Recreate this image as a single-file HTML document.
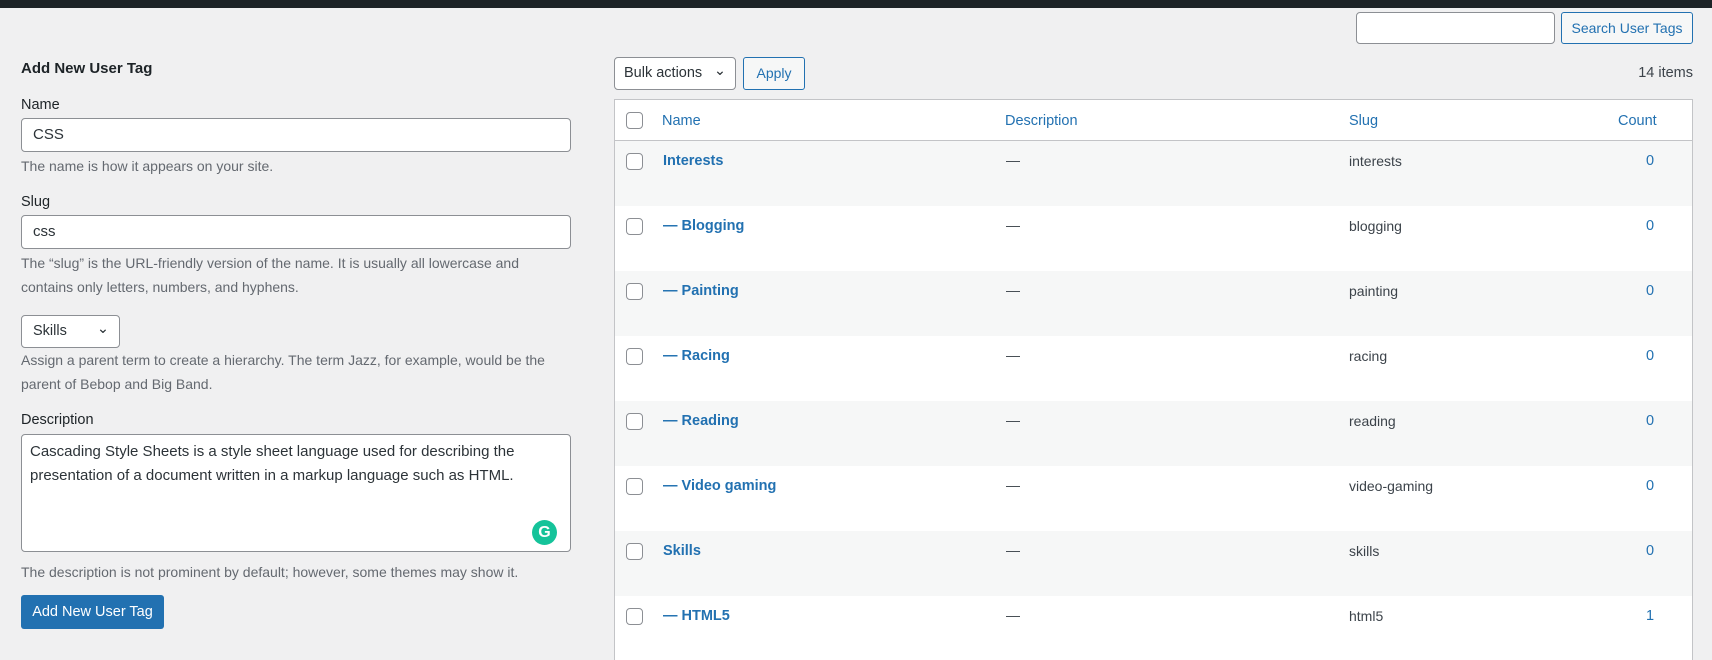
<!DOCTYPE html><html style="overflow:hidden;height:660px"><head><style>
body{margin:0;width:1712px;height:660px;overflow:hidden;background:#f0f0f1;font-family:"Liberation Sans",sans-serif;font-size:14px;color:#3c434a;position:relative}
.a{position:absolute}
.bar{left:0;top:0;width:1712px;height:8px;background:#1d2327}
.inp{background:#fff;border:1px solid #8c8f94;border-radius:4px;box-sizing:border-box}
.lab{color:#1d2327;font-size:14.5px}
.help{color:#646970;font-size:14px;line-height:24px}
.btn2{border:1px solid #2271b1;color:#2271b1;background:#f6f7f7;border-radius:3px;box-sizing:border-box;font-size:14px;text-align:center}
.cb{width:17px;height:17px;border:1px solid #8c8f94;border-radius:4px;background:#fff;box-sizing:border-box}
.row{left:615px;width:1077px;height:65px}
.nm{color:#2271b1;font-weight:bold;font-size:14.5px}
.lk{color:#2271b1;font-size:14.5px}
</style></head><body>
<div class="a bar"></div>
<div class="a inp" style="left:1356px;top:12px;width:199px;height:32px"></div>
<div class="a btn2" style="left:1561px;top:12px;width:132px;height:32px;line-height:30px">Search User Tags</div>

<div class="a" style="left:21px;top:60px;font-weight:bold;font-size:15px;color:#1d2327">Add New User Tag</div>
<div class="a lab" style="left:21px;top:97px">Name</div>
<div class="a inp" style="left:21px;top:118px;width:550px;height:34px;padding:7px 11px;font-size:15px;color:#2c3338">CSS</div>
<div class="a help" style="left:21px;top:154px">The name is how it appears on your site.</div>
<div class="a lab" style="left:21px;top:194px">Slug</div>
<div class="a inp" style="left:21px;top:215px;width:550px;height:34px;padding:7px 11px;font-size:15px;color:#2c3338">css</div>
<div class="a help" style="left:21px;top:251px">The “slug” is the URL-friendly version of the name. It is usually all lowercase and<br>contains only letters, numbers, and hyphens.</div>
<div class="a inp" style="left:21px;top:315px;width:99px;height:33px;padding:7px 11px;font-size:14.5px;color:#2c3338">Skills <span style="position:absolute;right:10px;top:5px">⌄</span></div>
<div class="a help" style="left:21px;top:348px">Assign a parent term to create a hierarchy. The term Jazz, for example, would be the<br>parent of Bebop and Big Band.</div>
<div class="a lab" style="left:21px;top:412px">Description</div>
<div class="a inp" style="left:21px;top:434px;width:550px;height:118px;padding:5px 8px;font-size:15px;line-height:24px;color:#2c3338">Cascading Style Sheets is a style sheet language used for describing the presentation of a document written in a markup language such as HTML.</div>
<div class="a" style="left:532px;top:520px;width:25px;height:25px;border-radius:50%;background:#15c39a;color:#fff;font-weight:bold;text-align:center;line-height:25px;font-size:16px">G</div>
<div class="a help" style="left:21px;top:560px">The description is not prominent by default; however, some themes may show it.</div>
<div class="a" style="left:21px;top:595px;width:143px;height:34px;background:#2271b1;border-radius:3px;color:#fff;text-align:center;line-height:34px;font-size:14.5px">Add New User Tag</div>

<div class="a inp" style="left:614px;top:57px;width:122px;height:33px;padding:7px 9px;font-size:14.5px;color:#2c3338">Bulk actions <span style="position:absolute;right:9px;top:5px">⌄</span></div>
<div class="a btn2" style="left:743px;top:57px;width:62px;height:33px;line-height:31px">Apply</div>
<div class="a" style="right:19px;top:65px;font-size:14.5px;color:#3c434a">14 items</div>

<div class="a" style="left:614px;top:99px;width:1079px;height:561px;border:1px solid #c3c4c7;border-bottom:none;background:#fff;box-sizing:border-box"></div>
<div class="a" style="left:615px;top:140px;width:1077px;height:1px;background:#c3c4c7"></div>
<div class="a cb" style="left:626px;top:112px"></div>
<div class="a lk" style="left:662px;top:113px">Name</div>
<div class="a lk" style="left:1005px;top:113px">Description</div>
<div class="a lk" style="left:1349px;top:113px">Slug</div>
<div class="a lk" style="left:1618px;top:113px">Count</div>

<div class="a row" style="top:141px;background:#f6f7f7"></div>
<div class="a row" style="top:271px;background:#f6f7f7"></div>
<div class="a row" style="top:401px;background:#f6f7f7"></div>
<div class="a row" style="top:531px;background:#f6f7f7"></div>

<div class="a cb" style="left:626px;top:153px"></div><div class="a nm" style="left:663px;top:153px">Interests</div><div class="a" style="left:1006px;top:152px">—</div><div class="a" style="left:1349px;top:153px">interests</div><div class="a lk" style="left:1646px;top:153px">0</div>
<div class="a cb" style="left:626px;top:218px"></div><div class="a nm" style="left:663px;top:218px">— Blogging</div><div class="a" style="left:1006px;top:217px">—</div><div class="a" style="left:1349px;top:218px">blogging</div><div class="a lk" style="left:1646px;top:218px">0</div>
<div class="a cb" style="left:626px;top:283px"></div><div class="a nm" style="left:663px;top:283px">— Painting</div><div class="a" style="left:1006px;top:282px">—</div><div class="a" style="left:1349px;top:283px">painting</div><div class="a lk" style="left:1646px;top:283px">0</div>
<div class="a cb" style="left:626px;top:348px"></div><div class="a nm" style="left:663px;top:348px">— Racing</div><div class="a" style="left:1006px;top:347px">—</div><div class="a" style="left:1349px;top:348px">racing</div><div class="a lk" style="left:1646px;top:348px">0</div>
<div class="a cb" style="left:626px;top:413px"></div><div class="a nm" style="left:663px;top:413px">— Reading</div><div class="a" style="left:1006px;top:412px">—</div><div class="a" style="left:1349px;top:413px">reading</div><div class="a lk" style="left:1646px;top:413px">0</div>
<div class="a cb" style="left:626px;top:478px"></div><div class="a nm" style="left:663px;top:478px">— Video gaming</div><div class="a" style="left:1006px;top:477px">—</div><div class="a" style="left:1349px;top:478px">video-gaming</div><div class="a lk" style="left:1646px;top:478px">0</div>
<div class="a cb" style="left:626px;top:543px"></div><div class="a nm" style="left:663px;top:543px">Skills</div><div class="a" style="left:1006px;top:542px">—</div><div class="a" style="left:1349px;top:543px">skills</div><div class="a lk" style="left:1646px;top:543px">0</div>
<div class="a cb" style="left:626px;top:608px"></div><div class="a nm" style="left:663px;top:608px">— HTML5</div><div class="a" style="left:1006px;top:607px">—</div><div class="a" style="left:1349px;top:608px">html5</div><div class="a lk" style="left:1646px;top:608px">1</div>
</body></html>
